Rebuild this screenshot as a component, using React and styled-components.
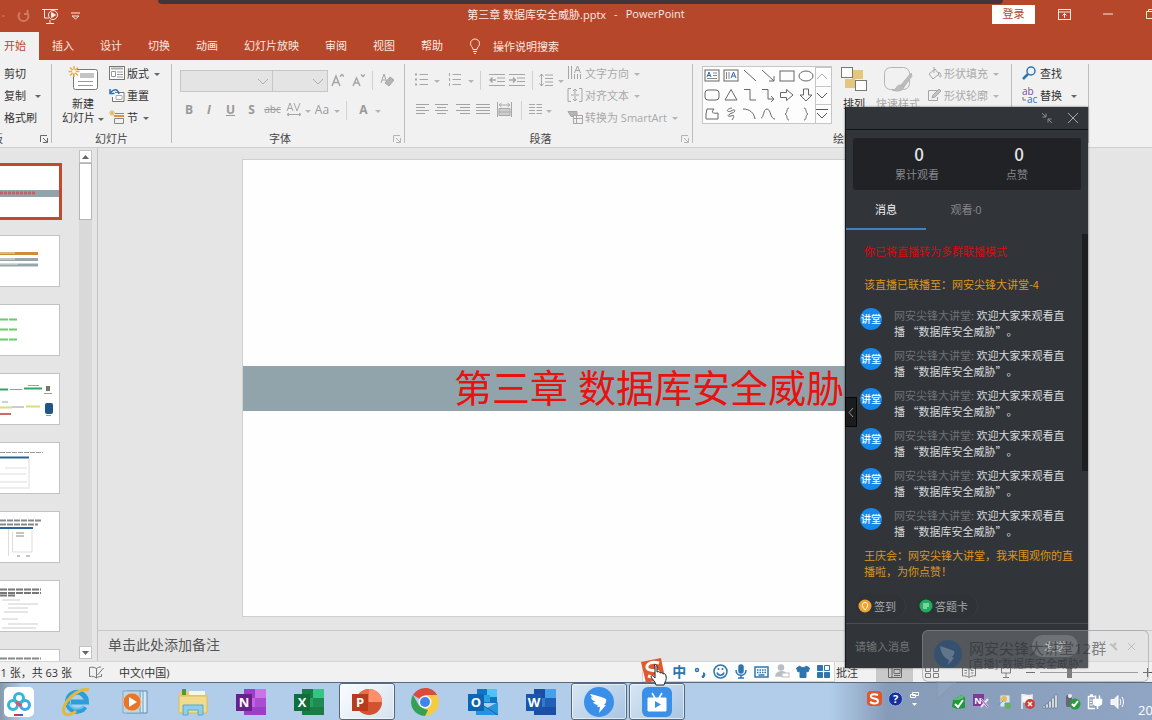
import React from 'react';
import styled, { createGlobalStyle, css } from 'styled-components';

const GlobalStyle = createGlobalStyle`
  * {
    box-sizing: border-box;
  }

  body {
    margin: 0;
    overflow: hidden;
    font-family: 'Open Sans', 'Noto Sans CJK SC', sans-serif;
    font-size: 11px;
    color: #333;
    text-spacing-trim: space-all;
  }

  button, input, select {
    font: inherit;
    color: inherit;
    margin: 0;
    padding: 0;
    border: 0;
    background: none;
  }

  svg {
    display: block;
    flex: none;
  }
`;

const Window = styled.div`
  position: relative;
  display: flex;
  flex-direction: column;
  height: 100vh;
  overflow: hidden;
  background: #e5e5e5;
`;

/* ---------- title bar and tabs ---------- */

const Header = styled.header`
  background: #b7472a;
  color: #fbe9e2;
`;

const ShareStrip = styled.div`
  position: absolute;
  top: 0;
  left: 158px;
  right: 149px;
  height: 4px;
  background: #43333a;
  border-radius: 0 0 4px 4px;
`;

const TitleBar = styled.div`
  display: grid;
  grid-template-columns: 1fr auto 1fr;
  align-items: center;
  height: 32px;
  padding-bottom: 4px;
`;

const QuickAccess = styled.div`
  display: flex;
  align-items: center;
  gap: 12px;
  padding-left: 2px;
  padding-top: 4px;
`;

const DocTitle = styled.span`
  display: flex;
  gap: 8px;
`;

const WindowButtons = styled.div`
  display: flex;
  justify-content: flex-end;
  margin-right: -20px;
`;

const Login = styled.button`
  width: 43px;
  height: 19px;
  margin-right: 8px;
  background: #fff;
  color: #b7472a;
  line-height: 16px;
`;

const WindowButton = styled.button`
  display: flex;
  align-items: center;
  justify-content: center;
  width: 43px;
`;

const Tabs = styled.nav`
  display: flex;
  height: 28px;
`;

const Tab = styled.button`
  padding: 0 13px;
  line-height: 26px;
  white-space: nowrap;

  ${(p) => p.$active && css`
    padding-left: 4px;
    background: #f1f1f1;
    color: #b7472a;
  `}
`;

const TellMe = styled.button`
  display: flex;
  align-items: center;
  gap: 12px;
  padding: 0 13px;
`;

/* ---------- ribbon ---------- */

const Ribbon = styled.section`
  display: flex;
  height: 88px;
  background: #f1f1f1;
  border-bottom: 1px solid #cfcfcf;
`;

const Group = styled.div`
  display: flex;
  flex-direction: column;
  flex: 0 0 ${(p) => p.$width}px;
  padding-top: 2px;
  overflow: hidden;
`;

const GroupBody = styled.div`
  display: flex;
  height: 66px;
  padding-left: ${(p) => p.$pad || 0}px;
`;

const GroupLabel = styled.div`
  display: flex;
  align-items: center;
  justify-content: space-between;
  height: 19px;
  color: #444;

  span {
    flex: 1;
    text-align: center;
  }
`;

const ClippedLabel = styled.div`
  display: flex;
  justify-content: flex-end;
  width: 3px;
  overflow: hidden;
  white-space: nowrap;
`;

const Launcher = styled.button`
  width: 16px;
  padding: 2px 0 0 5px;
`;

const Separator = styled.i`
  flex: none;
  width: 1px;
  margin: 4px 0;
  background: #bdbdbd;
`;

const Column = styled.div`
  display: flex;
  flex-direction: column;
  align-items: flex-start;
  margin-left: ${(p) => p.$gap || 0}px;
`;

const Command = styled.button`
  display: flex;
  align-items: center;
  gap: 2px;
  height: 22px;
  white-space: nowrap;
  color: ${(p) => (p.$off ? '#a9a9a9' : '#333')};
`;

const Caret = styled.i`
  flex: none;
  margin: 2px 0 0 ${(p) => p.$gap || 3}px;
  border: 3px solid transparent;
  border-top-color: ${(p) => (p.$off ? '#b5b5b5' : '#666')};
  border-bottom: 0;
`;

const BigCommand = styled.button`
  display: flex;
  flex-direction: column;
  align-items: center;
  padding-top: 3px;
  line-height: 14px;
  white-space: nowrap;
  color: ${(p) => (p.$off ? '#a9a9a9' : '#333')};

  svg {
    margin-bottom: 5px;
  }

  span {
    display: flex;
    align-items: center;
  }
`;

const ToolRow = styled.div`
  display: flex;
  align-items: center;
  height: ${(p) => p.$height || 30}px;
  color: #999;
`;

const Tool = styled.button`
  display: flex;
  align-items: center;
  justify-content: center;
  width: ${(p) => p.$width || 21}px;
  height: 22px;
  padding-bottom: 2px;
  font-size: 12px;
  font-weight: ${(p) => (p.$bold ? 700 : 400)};
  font-style: ${(p) => (p.$italic ? 'italic' : 'normal')};
  text-decoration: ${(p) => p.$line || 'none'};
`;

const ToolLine = styled.i`
  width: 1px;
  height: 19px;
  margin: 0 ${(p) => p.$gap || 6}px;
  background: #d2d2d2;
`;

const Combo = styled.span`
  position: relative;
  width: ${(p) => p.$width}px;
  height: 22px;
  margin-right: -1px;

  select {
    width: 100%;
    height: 100%;
    appearance: none;
    background: #e4e4e4;
    border: 1px solid #c6c6c6;
  }

  svg {
    position: absolute;
    right: 4px;
    top: 8px;
    pointer-events: none;
  }
`;

const Gallery = styled.div`
  display: flex;
  width: 130px;
  height: 58px;
  margin-top: 4px;
  background: #fdfdfd;
  border: 1px solid #c6c6c6;
`;

const Shapes = styled.div`
  flex: 1;
  display: grid;
  grid-template-columns: repeat(6, 1fr);
  place-items: center;
`;

const GalleryScroll = styled.div`
  display: flex;
  flex-direction: column;

  button {
    flex: 1;
    width: 16px;
    border-left: 1px solid #c6c6c6;
    border-top: 1px solid #c6c6c6;
  }
`;

/* ---------- workspace ---------- */

const Workspace = styled.main`
  flex: 1;
  display: flex;
  min-height: 0;
`;

const Thumbs = styled.aside`
  width: 79px;
  padding-top: 15px;
  overflow: hidden;
`;

const Thumb = styled.div`
  width: 60px;
  height: 52px;
  margin-bottom: 17px;
  background: #fff;
  border: 1px solid #c3c3c3;
  border-left: 0;

  ${(p) => p.$selected && css`
    width: 62px;
    height: 57px;
    margin-bottom: 15px;
    border: 3px solid #bf4a2e;
    border-left: 0;
  `}
`;

const ScrollTrack = styled.div`
  display: flex;
  flex-direction: column;
  width: 13px;
  margin: 2px 5px 2px 0;
  background: #d9d9d9;

  button {
    display: flex;
    align-items: center;
    justify-content: center;
    height: 13px;
    background: #fff;
    border: 1px solid #c3c3c3;
  }
`;

const ScrollThumb = styled.div`
  height: 57px;
  margin-bottom: auto;
  background: #fff;
  border: 1px solid #b5b5b5;
`;

const Editor = styled.section`
  flex: 1;
  display: flex;
  flex-direction: column;
  border-left: 1px solid #c3c3c3;
`;

const Canvas = styled.div`
  flex: 1;
  padding: 11px 96px 13px 144px;
`;

const Slide = styled.div`
  height: 100%;
  padding-top: 206px;
  background: #fefefe;
  border: 1px solid #cfcfcf;
`;

const SlideTitle = styled.h1`
  margin: 0;
  height: 45px;
  background: #91a4ac;
  color: #e8120f;
  font-size: 38px;
  font-weight: 400;
  line-height: 42px;
  text-align: center;
  white-space: nowrap;
`;

const Notes = styled.div`
  height: 31px;
  padding-left: 10px;
  border-top: 1px solid #c9c9c9;
  font-size: 14px;
  line-height: 28px;
  color: #555;
`;

/* ---------- status bar ---------- */

const StatusBar = styled.footer`
  display: flex;
  align-items: center;
  height: 21px;
  background: #f1f1f1;
  border-top: 1px solid #d5d5d5;
`;

const SlideCount = styled.span`
  display: flex;
  justify-content: flex-end;
  width: 72px;
  margin-right: 17px;
  overflow: hidden;
  white-space: nowrap;
`;

const Language = styled.span`
  margin: 0 auto 0 14px;
`;

const CommentsButton = styled.button`
  margin-right: 18px;
`;

const ViewButton = styled.button`
  display: flex;
  align-items: center;
  justify-content: center;
  width: 37px;
  height: 20px;
  background: ${(p) => (p.$active ? '#c9c9c9' : 'none')};
`;

const ZoomControl = styled.div`
  display: flex;
  align-items: center;
  gap: 5px;
  padding-left: 2px;
`;

const Zoom = styled.input`
  width: 98px;
  height: 16px;
  margin: 0;
  appearance: none;

  &::-webkit-slider-runnable-track {
    height: 1px;
    background: #8d8d8d;
  }

  &::-webkit-slider-thumb {
    appearance: none;
    width: 5px;
    height: 12px;
    margin-top: -6px;
    background: #666;
  }
`;

/* ---------- input method bar ---------- */

const ImeBar = styled.div`
  position: absolute;
  left: 642px;
  bottom: 38px;
  display: flex;
  align-items: center;
  height: 21px;
  width: 193px;
  padding-left: 26px;
  background: #fdfdfd;
  border: 1px solid #d5d5d5;
  color: #2e75b0;

  button {
    display: flex;
    justify-content: center;
    width: 21px;
    font-size: 14px;
    font-weight: 700;
    line-height: 18px;
  }
`;

const ImeLogo = styled.svg`
  position: absolute;
  left: -4px;
  top: -6px;
`;

/* ---------- taskbar ---------- */

const Taskbar = styled.nav`
  display: flex;
  height: 38px;
  border-top: 1px solid #566b82;
  background: linear-gradient(90deg, #8799ad 0, #b1cde9 22px, #b1cde9 72%, #869bb8 77%, #8fa5c3 100%);
`;

const Apps = styled.div`
  display: flex;
  gap: 2px;
  margin: 0 auto 0 -9px;
`;

const AppButton = styled.button`
  display: flex;
  align-items: center;
  justify-content: center;
  width: 56px;
  height: 37px;

  ${(p) => p.$open && css`
    border: 1px solid #53677d;
    border-radius: 3px;
    background: linear-gradient(135deg, ${p.$front ? '#fbfdff, #d5e2ef' : '#d8e6f4, #a9c5e2'});
    box-shadow: inset 0 0 0 1px rgba(255, 255, 255, 0.6);
  `}
`;

const Tray = styled.div`
  display: flex;
  align-items: center;
  gap: 6px;
  color: #fff;
`;

const TrayGroup = styled.div`
  display: flex;
  align-items: center;
  gap: 6px;
  margin-right: 26px;
  padding-bottom: 5px;
`;

const Clock = styled.span`
  width: 14px;
  margin-left: 6px;
  padding-top: 16px;
  overflow: hidden;
  font-size: 13px;
  line-height: 20px;
`;

/* ---------- live chat window ---------- */

const Live = styled.section`
  position: absolute;
  top: 107px;
  right: 64px;
  display: flex;
  flex-direction: column;
  width: 243px;
  height: 561px;
  background: #313539;
  border-left: 1px solid #17191b;
  box-shadow: 0 0 2px rgba(0, 0, 0, 0.6);
  color: #d8dadc;
  font-family: 'Noto Sans CJK SC', sans-serif;
`;

const LiveBar = styled.div`
  display: flex;
  align-items: center;
  justify-content: flex-end;
  gap: 14px;
  height: 23px;
  padding-right: 9px;
  border-bottom: 1px solid #111214;
`;

const Stats = styled.dl`
  display: flex;
  flex: none;
  margin: 8px 7px 0;
  padding: 5px 14px 0;
  height: 52px;
  background: #202226;
  border-radius: 3px;
  text-align: center;
`;

const Stat = styled.div`
  flex: 1;
  display: flex;
  flex-direction: column-reverse;
  justify-content: flex-end;

  dt {
    color: #85878a;
    line-height: 20px;
  }

  dd {
    margin: 0;
    padding-left: 4px;
    font-size: 17px;
    font-weight: 500;
    line-height: 21px;
    color: #e6e6e6;
  }
`;

const LiveTabs = styled.div`
  display: flex;
  font-family: 'Open Sans', 'Noto Sans CJK SC', sans-serif;
`;

const LiveTab = styled.button`
  width: 80px;
  height: 40px;
  border-bottom: 2px solid ${(p) => (p.$active ? '#3c82c4' : 'transparent')};
  color: ${(p) => (p.$active ? '#f2f2f2' : '#85878a')};
`;

const Feed = styled.div`
  flex: 1;
  display: flex;
  min-height: 0;
  padding: 13px 0 0 18px;
`;

const FeedList = styled.div`
  flex: 1;
  line-height: 16px;
`;

const FeedScroll = styled.div`
  width: 6px;
  height: 237px;
  margin: -9px 0 0;
  background: #1d1f22;
`;

const Notice = styled.p`
  margin: 0 0 ${(p) => p.$gap || 0}px;
  color: ${(p) => (p.$red ? '#d9090d' : '#dd961c')};
`;

const Message = styled.div`
  display: flex;
  gap: 12px;
  margin: 0 10px 8px -4px;

  p {
    margin: 0;
  }

  em {
    font-style: normal;
    color: #6f7276;
  }
`;

const Avatar = styled.span`
  flex: none;
  width: 22px;
  height: 22px;
  margin-top: 1px;
  border-radius: 50%;
  background: #1787ea;
  color: #fff;
  font-size: 10px;
  font-weight: 500;
  line-height: 21px;
  text-align: center;
`;

const Actions = styled.div`
  display: flex;
  gap: 12px;
  padding-left: 10px;
  height: 35px;
  align-items: center;
  border-bottom: 1px solid #494d51;
`;

const Action = styled.button`
  display: flex;
  align-items: center;
  gap: 2px;
  height: 24px;
  padding: 0 9px 0 2px;
  border-radius: 12px;
  background: #2f3337;
  box-shadow: 1px 0 0 #383c40;
  color: #a7a9ab;
`;

const Compose = styled.div`
  display: flex;
  align-items: center;
  justify-content: space-between;
  height: 44px;
  padding: 0 10px 0 9px;

  input {
    width: 90px;
  }

  input::placeholder {
    color: #74777a;
  }
`;

const Send = styled.button`
  width: 46px;
  height: 22px;
  border-radius: 11px;
  background: #54585b;
  color: #b5b7b9;
`;

const Fold = styled.button`
  position: absolute;
  left: -1px;
  top: 290px;
  display: flex;
  align-items: center;
  justify-content: center;
  width: 12px;
  height: 30px;
  background: #1b1c1e;
  border: 1px solid #050505;
`;

/* ---------- fading toast ---------- */

const Toast = styled.div`
  position: absolute;
  right: 3px;
  bottom: 38px;
  display: flex;
  gap: 6px;
  width: 227px;
  height: 52px;
  padding: 8px 10px;
  background: rgba(225, 226, 232, 0.2);
  border: 1px solid rgba(140, 145, 152, 0.5);
  border-radius: 6px;
  color: rgba(38, 42, 48, 0.55);
`;

const ToastText = styled.div`
  flex: 1;
  white-space: nowrap;
  line-height: 14px;

  strong {
    display: block;
    font-size: 15px;
    font-weight: 400;
    line-height: 18px;
  }
`;

const ToastIcons = styled.div`
  position: absolute;
  right: 12px;
  top: 11px;
  display: flex;
  gap: 9px;
`;

const ToastTail = styled.svg`
  position: absolute;
  left: 13px;
  top: 50px;
`;

/* ---------- drawings ---------- */

const Icon = ({ w = 15, h = w, children, c = '#a6a6a6', sw = 1 }) => (
  <svg width={w} height={h} viewBox={`0 0 ${w} ${h}`} fill="none" stroke={c} strokeWidth={sw} aria-hidden="true">
    {children}
  </svg>
);

const Chevron = ({ c = '#b0b0b0', up }) => (
  <Icon w={12} h={7} c={c}>
    <path d={up ? 'M1 6l5-5 5 5' : 'M1 1l5 5 5-5'} />
  </Icon>
);

const LaunchIcon = ({ off }) => (
  <Icon w={8} c={off ? '#b5b5b5' : '#666'}>
    <path d="M.5 7V.5H7M3 3l4 4M7.500 3v4.500H3" />
  </Icon>
);

const Lines = ({ rows }) => (
  <Icon w={14} h={13} c="#a3a3a3">
    {rows.map(([from, to], i) => (
      <path key={i} d={`M${from} ${i * 3 + 1.5}H${to}`} />
    ))}
  </Icon>
);

const shapes = [
  <><rect x="1" y="2" width="14" height="11" /><path d="M9 5h4M9 7.500h4M3 10.500h10" stroke="#888" /><path d="M3 9l2-5 2 5M4 7.500h2" stroke="#2b6ca8" /></>,
  <><rect x="1" y="2" width="14" height="11" /><path d="M3.500 4v7M6 4v7" stroke="#888" /><path d="M8 10l2.500-6 2.500 6M9 8h3" stroke="#2b6ca8" /></>,
  <path d="M2 2l12 11" />,
  <path d="M2 2l12 11M9 13h5V8" />,
  <rect x="1" y="3" width="14" height="10" />,
  <ellipse cx="8" cy="8" rx="7" ry="5" />,
  <rect x="1" y="3" width="14" height="10" rx="3" />,
  <path d="M8 2.500L2 13h12z" />,
  <path d="M2 2.500h6V13h6" />,
  <path d="M2 2.500h6V12h6M11 9l3 3-3 3" />,
  <path d="M1.500 5.500h6v-3L14 8l-6.500 5.500v-3h-6z" />,
  <path d="M5.500 2h5v6H14l-6 6-6-6h3.500z" />,
  <path d="M3 3h7c-3 3-2 5 4 4v6H2V8z" />,
  <path d="M9 2c-7 1-5 5-1 3 5-3 5 1 1 2-5 2-5 4-1 3 4-2 3 1 1 4" />,
  <path d="M1 3c7 0 11 4 12 10" />,
  <path d="M1 12c3 0 2-9 6-9s3 10 8 10" />,
  <path d="M10 2c-3 0-1 5-4 6 3 1 1 6 4 6" />,
  <path d="M6 2c3 0 1 5 4 6-3 1-1 6-4 6" />,
];

const thumbDrawings = [
  <><path d="M0 18h60v7H0z" fill="#91a4ac" transform="translate(0 6)" /><path d="M0 27h36" stroke="#d05a64" strokeWidth="3" strokeDasharray="3 1" /></>,
  <><path d="M0 17.500h38" stroke="#cf8a3a" strokeWidth="3" /><path d="M0 23.500h38M0 29h38" stroke="#97a5ad" strokeWidth="3" /><path d="M0 17h15M0 23h15M0 28h18" stroke="#e9e3cf" /></>,
  <path d="M0 14.500h17M0 24.500h17M0 34.500h17" stroke="#69cc69" strokeWidth="2" strokeDasharray="8 1" />,
  <><path d="M0 15.500h8M24 14.500h18" stroke="#38a169" strokeWidth="2" /><path d="M10 15.500h12M12 33h12M44 19.500h8M46 41.500h5" stroke="#999" /><path d="M28 11.500h11M2 28h6" stroke="#79b98c" /><path d="M0 33.500h12M26 32.500h14" stroke="#d9dc86" strokeWidth="2" /><path d="M0 40h11" stroke="#cf6a62" strokeWidth="2" /><rect x="45" y="29" width="8" height="11" rx="2" fill="#1f5587" /><path d="M46 12h4v5h-4z" fill="#776" /></>,
  <><path d="M0 9.500h43" stroke="#999" strokeDasharray="5 1" /><path d="M0 14.500h29" stroke="#2a6496" strokeWidth="2" /><path d="M29 16v30M5 25h22M0 31h26M0 39h27M0 45h28" stroke="#ddd" /></>,
  <><path d="M0 8.500h41M0 12.500h38" stroke="#888" strokeWidth="2" strokeDasharray="6 1" /><path d="M0 16h33" stroke="#2a6496" strokeWidth="2" /><path d="M8.500 17v27M12.500 20v20H32V18" stroke="#ddd" /><path d="M16 21h8M16 24h8M17 44h3M26 44h4" stroke="#888" /></>,
  <><path d="M0 8.500h41M0 12h41M0 14.500h16" stroke="#777" strokeWidth="2" strokeDasharray="7 1" /><path d="M2 19h18M8 23h30M8 27h20M4 31h24M2 38h16M8 43h30M2 47h34" stroke="#ccc" /></>,
  <path d="M0 8.500h41M0 12h41" stroke="#888" strokeWidth="2" strokeDasharray="7 1" />,
];

const OfficeIcon = ({ letter, dark, mid, light, pale }) => (
  <svg width="32" height="28" viewBox="0 0 32 28">
    <path d="M9 1h11v13H9z" fill={mid} />
    <path d="M20 1h11v9H20z" fill={pale} />
    <path d="M9 10h22v9H9z" fill={light} />
    <path d="M9 19h22v8H9z" fill={mid} />
    <path d="M20 10h11v9H20z" fill={mid} opacity=".6" />
    <rect x="1" y="6" width="16" height="17" fill={dark} />
    <text x="9" y="19" textAnchor="middle" fontSize="13" fontWeight="700" fill="#fff">{letter}</text>
  </svg>
);

const appIcons = [
  ['网盘', <svg width="30" height="30" viewBox="0 0 30 30"><rect width="30" height="30" rx="5" fill="#fff" /><g fill="none" strokeWidth="3"><circle cx="9" cy="18" r="4.500" stroke="#35b6d6" /><circle cx="21" cy="18" r="4.500" stroke="#3fa9e8" /><circle cx="15" cy="11" r="4.500" stroke="#35b6d6" /><path d="M12 15l5 4" stroke="#e85062" /></g><path d="M10 28h5" stroke="#d33" strokeWidth="2" /><path d="M15 28h4" stroke="#36c" strokeWidth="2" /></svg>],
  ['Internet Explorer', <svg width="32" height="32" viewBox="0 0 32 32" fill="none"><path d="M24 21a9.500 9.500 0 1 1 1.500-5H10" stroke="#2c9fdb" strokeWidth="5" /><path d="M23 20a9.500 9.500 0 0 1-15-2" stroke="#5cc6ee" strokeWidth="2" /><path d="M3 27C-1 18 18 0 28 4M3 27c3 4 10 0 12-2" stroke="#e5b936" strokeWidth="3" /></svg>],
  ['Media Player', <svg width="28" height="26" viewBox="0 0 28 26"><path d="M6 2h20v22H6z" fill="#d9e8f2" stroke="#5491b8" /><path d="M22 2v22M19 2v22" stroke="#6c9fc2" /><path d="M2 2h17v22H2z" fill="#bcd8e8" stroke="#7aaac6" /><circle cx="11" cy="13" r="9" fill="#e5762a" stroke="#f5bd8c" /><path d="M8 8l8 5-8 5z" fill="#fff" /></svg>],
  ['文件夹', <svg width="32" height="28" viewBox="0 0 32 28"><path d="M3 3h24l2 3v18H2V6z" fill="#e5cb72" /><path d="M5 1h4v6H5z" fill="#4d9a3c" /><path d="M12 3h16v4H12z" fill="#f9f5e5" /><path d="M2 8h28v17H2z" fill="#f1dc8d" stroke="#dcbd5b" /><path d="M6 27V17h20v10h-5v-5H11v5z" fill="#8fcdea" stroke="#5ba8cb" /></svg>],
  ['OneNote', <OfficeIcon letter="N" dark="#6b1f8b" mid="#9a3fc7" light="#c263e0" pale="#ca73e8" />],
  ['Excel', <OfficeIcon letter="X" dark="#0f6e3a" mid="#1c7b46" light="#24a263" pale="#35c481" />],
  ['PowerPoint', <svg width="32" height="28" viewBox="0 0 32 28"><circle cx="18" cy="14" r="13" fill="#d35230" /><path d="M18 1a13 13 0 0 1 13 13H18z" fill="#ff8f6b" /><path d="M18 1v13H5A13 13 0 0 1 18 1" fill="#ed6c47" /><rect x="1" y="6" width="16" height="17" fill="#b83b1d" /><text x="9" y="19" textAnchor="middle" fontSize="13" fontWeight="700" fill="#fff">P</text></svg>, true, true],
  ['Chrome', <svg width="28" height="28" viewBox="0 0 28 28"><path d="M14 14L1.900 7A14 14 0 0 1 26.100 7z" fill="#dc4a3c" /><path d="M14 0a14 14 0 0 1 12.100 7L14 7z" fill="#dc4a3c" /><path d="M14 14l12.100-7A14 14 0 0 1 14 28z" fill="#f5cb45" /><path d="M14 7h12.100L20 17.500z" fill="#f5cb45" /><path d="M14 28A14 14 0 0 1 1.900 7L8 17.500l6 3.500 3 1z" fill="#35a054" /><circle cx="14" cy="14" r="6.500" fill="#f4f4f4" /><circle cx="14" cy="14" r="5" fill="#4285e8" /></svg>],
  ['Outlook', <svg width="32" height="28" viewBox="0 0 32 28"><path d="M10 1h20v14H10z" fill="#1275c4" /><path d="M20 1h10v8H20z" fill="#4fc3f3" /><path d="M16 7h7v7h-7z" fill="#2da1df" /><path d="M9 14l11 6 11-6v13H9z" fill="#2594dc" /><path d="M31 27L17 18" stroke="#1066ae" /><rect x="1" y="6" width="16" height="17" fill="#0f65b4" /><text x="9" y="19" textAnchor="middle" fontSize="13" fontWeight="700" fill="#fff">O</text></svg>],
  ['Word', <OfficeIcon letter="W" dark="#1a56a8" mid="#1b4fa3" light="#2b7cd3" pale="#49a0ea" />],
  ['钉钉', <svg width="30" height="30" viewBox="0 0 30 30"><circle cx="15" cy="15" r="15" fill="#3a8fe8" /><path d="M6 7c6 1 12 3 16 5 1 3-1 5-2 6h2l-7 8 1-6h-3l1-2c-2 0-4-1-5-3h3c-3-1-5-3-5-5l3 1c-2-1-3-2-4-4z" fill="#fff" /></svg>, true],
  ['直播', <svg width="30" height="30" viewBox="0 0 30 30"><rect width="30" height="30" rx="6" fill="#3a8fe8" /><path d="M6 11h18v13H6z" fill="#fff" stroke="#fff" strokeLinejoin="round" /><path d="M10 6l3 5M20 6l-3 5" stroke="#fff" strokeWidth="1.500" /><path d="M13 14l6 3.500-6 3.500z" fill="#3a8fe8" /></svg>, true],
];

const trayIcons = [
  <svg width="16" height="16" viewBox="0 0 16 16"><path d="M2 6l8-5 4 2v11l-8 1-5-2z" fill="#1d9a3c" /><path d="M2 6l8-5 4 2-6 3z" fill="#5dbd70" /><path d="M4 10l3 3 5-7" fill="none" stroke="#fff" strokeWidth="2" /></svg>,
  <svg width="17" height="15" viewBox="0 0 17 15"><rect width="11" height="12" fill="#7d3a97" /><text x="5" y="10" textAnchor="middle" fontSize="9" fontWeight="700" fill="#fff">N</text><path d="M8 5l7 8M15 5l-7 8" stroke="#f1dff5" strokeWidth="2" /><path d="M8 5l7 8" stroke="#8a3da5" /></svg>,
  <svg width="17" height="16" viewBox="0 0 17 16"><rect x="4" y="1" width="10" height="12" fill="#dce6ee" stroke="#8da5b9" /><circle cx="8" cy="5" r="3" fill="#e9ba57" /><path d="M9 9h5v4H9zM2 11l5-4" fill="#4e9fd5" stroke="#4e9fd5" /><circle cx="12" cy="12" r="3" fill="#66b45a" /></svg>,
  <svg width="17" height="17" viewBox="0 0 17 17"><path d="M3 1v15M3 2c4-1 5 2 10 0v7c-5 2-6-1-10 0" fill="#f7f7f7" stroke="#eee" strokeWidth="1.500" /><circle cx="11" cy="11" r="5" fill="#d23b33" /><path d="M9 9l4 4M13 9l-4 4" stroke="#fff" strokeWidth="1.500" /></svg>,
  <svg width="17" height="15" viewBox="0 0 17 15"><path d="M1 12h2v2H1zM4 10h2v4H4zM7 7h2v7H7zM10 4h2v10h-2zM13 1h2v13h-2z" fill="#fff" stroke="#4d5d70" strokeWidth=".5" /></svg>,
  <svg width="16" height="17" viewBox="0 0 16 17"><rect x="1" y="2" width="6" height="12" rx="2" fill="#667" /><circle cx="5" cy="3" r="2" fill="#eee" /><circle cx="10" cy="11" r="5.500" fill="#2c9b3c" /><path d="M7 11l2 2 4-5" fill="none" stroke="#fff" strokeWidth="2" /></svg>,
  <svg width="16" height="16" viewBox="0 0 16 16" fill="none" stroke="#fff"><path d="M8 14.500H1.500v-12h6M3 1h3" strokeWidth="1.500" /><path d="M6.500 5.500h8v3c0 4-8 4-8 0zM10.500 11v4" fill="#fff" strokeWidth="1.500" /><path d="M8.500 1.500v4M12.500 1.500v4" strokeWidth="1.500" /><path d="M3 6h2M3 8.500h2M3 11h3" /></svg>,
  <svg width="17" height="16" viewBox="0 0 17 16" fill="none" stroke="#fff"><path d="M2 5.500h3l4-4v13l-4-4H2z" fill="#f3f3f3" /><path d="M11 5c1 2 1 4 0 6M13 3c2 3 2 7 0 10" /></svg>,
];

const tabs = ['插入', '设计', '切换', '动画', '幻灯片放映', '审阅', '视图', '帮助'];

const BulletIcon = ({ numbered }) => (
  <Icon w={13} h={15}>
    <path d="M4.500 2.500H13M4.500 7.500H13M4.500 12.500H13" />
    <path d={numbered ? 'M1.500 1v3M1.500 6v3M1.500 11v3' : 'M0 2.500h2M0 7.500h2M0 12.500h2'} strokeWidth={numbered ? 1 : 2} />
  </Icon>
);

const IndentIcon = ({ more }) => (
  <Icon w={16} h={14}>
    <path d="M0 1.500h16M8 5h8M8 8.500h8M0 12.500h16" />
    <path d={more ? 'M0 7h6M4 4.500L6.500 7 4 9.500' : 'M7 7H1M3.500 4.500L1 7l2.500 2.500'} strokeWidth="1.500" />
  </Icon>
);

const RibbonGroup = ({ width, pad, label, launch, off, children }) => (
  <>
    <Group $width={width}>
      <GroupBody $pad={pad}>{children}</GroupBody>
      <GroupLabel>
        <span>{label}</span>
        {launch && <Launcher aria-label={`${label}设置`}><LaunchIcon off={off} /></Launcher>}
      </GroupLabel>
    </Group>
    <Separator />
  </>
);

const HomeRibbon = () => (
  <Ribbon>
    <Group $width={51}>
      <GroupBody $pad={4}>
        <Column>
          <Command>剪切</Command>
          <Command>复制<Caret $gap={7} /></Command>
          <Command>格式刷</Command>
        </Column>
      </GroupBody>
      <GroupLabel>
        <ClippedLabel>剪贴板</ClippedLabel>
        <Launcher aria-label="剪贴板设置"><LaunchIcon /></Launcher>
      </GroupLabel>
    </Group>
    <Separator />

    <RibbonGroup width={119} pad={10} label="幻灯片">
      <BigCommand>
        <Icon w={32} h={27} c="#777">
          <rect x="6.500" y="4.500" width="24" height="20" rx="2" fill="#fff" />
          <path d="M11 16.500h15M11 20.500h15" stroke="#999" />
          <path d="M13 10.500h14" stroke="#c4c4c4" strokeWidth="5" />
          <path d="M7 1v11M1.500 6.500h11M3 2.500l8 8M11 2.500l-8 8" stroke="#e6b04e" strokeWidth="1.500" />
          <circle cx="7" cy="6.500" r="2" fill="#fff6dc" stroke="none" />
        </Icon>
        <span>新建</span>
        <span>幻灯片<Caret /></span>
      </BigCommand>
      <Column $gap={5}>
        <Command>
          <Icon w={16} h={14} c="#777"><rect x=".5" y=".5" width="15" height="13" fill="#fff" /><path d="M2 2.500h12" stroke="#aaa" strokeWidth="2" /><path d="M2.500 5.500h4v5h-4zM8 6h6M8 8.500h6M8 11h6" stroke="#999" /></Icon>
          版式<Caret />
        </Command>
        <Command>
          <Icon w={16} h={15} c="#777"><path d="M6 4.500h9v9H3.500V9" fill="#fff" /><path d="M7 7.500h6v4H7z" stroke="#aaa" /><path d="M1 5c4-5 8-4 9 1M1 1v4.500h4.500" stroke="#2d73b5" strokeWidth="1.500" /></Icon>
          重置
        </Command>
        <Command>
          <Icon w={16} h={15} c="#888"><path d="M6 3.500h9M5.500 8.500h9v5h-9z" /><path d="M5 6h10" stroke="#e0913e" strokeWidth="2" /><path d="M3 0v6M0 3h6M1 1l4 4M5 1L1 5" stroke="#e6b04e" /></Icon>
          节<Caret />
        </Command>
      </Column>
    </RibbonGroup>

    <RibbonGroup width={232} pad={8} label="字体" launch off>
      <Column>
        <ToolRow $height={37}>
          <Combo $width={93}><select aria-label="字体" /><Chevron /></Combo>
          <Combo $width={56}><select aria-label="字号" /><Chevron /></Combo>
          <Tool aria-label="增大字号"><Icon w={13} h={14} sw={1.5}><path d="M1 13L5 3l4 10M2.500 9.500h5M9 3.500l2-2 2 2" /></Icon></Tool>
          <Tool aria-label="减小字号"><Icon w={13} h={14} sw={1.5}><path d="M1 13l3.500-8L8 13M2.500 10h4M9 1.500l2 2 2-2" /></Icon></Tool>
          <ToolLine $gap={3} />
          <Tool aria-label="清除格式"><Icon w={14} h={14}><path d="M1 10L4 1l3 9M2 7h4" /><path d="M5 10l5-6 4 3-5 6z" fill="#b5b5b5" /></Icon></Tool>
        </ToolRow>
        <ToolRow $height={22}>
          <Tool $bold $width={18}>B</Tool>
          <Tool $bold $italic $width={22}>I</Tool>
          <Tool $bold $line="underline">U</Tool>
          <Tool $bold>S</Tool>
          <Tool $line="line-through" aria-label="删除线"><small>abc</small></Tool>
          <Tool aria-label="字符间距"><Icon w={16} h={15}><path d="M1 9l3-8 3 8M2 6.500h4M8 1l3 8 3-8M1 12.500h14M3 11l-2 1.500L3 14M13 11l2 1.500-2 1.500" /></Icon></Tool>
          <Caret $off $gap={1} />
          <Tool $width={22}>Aa</Tool>
          <Caret $off $gap={1} />
          <ToolLine $gap={6} />
          <Tool $bold>A</Tool>
          <Caret $off $gap={1} />
        </ToolRow>
      </Column>
    </RibbonGroup>

    <RibbonGroup width={287} pad={10} label="段落" launch off>
      <Column>
        <ToolRow $height={37}>
          <Tool $width={13} aria-label="项目符号"><BulletIcon /></Tool>
          <Caret $off $gap={6} />
          <Tool $width={29} aria-label="编号"><BulletIcon numbered /></Tool>
          <Caret $off $gap={-1} />
          <ToolLine $gap={6} />
          <Tool $width={20} aria-label="减少缩进"><IndentIcon /></Tool>
          <Tool $width={20} aria-label="增加缩进"><IndentIcon more /></Tool>
          <ToolLine $gap={5} />
          <Tool $width={16} aria-label="行距"><Icon w={14} h={14}><path d="M6 2h8M6 5.500h8M6 9h8M6 12.500h8M2.500 1v12M.5 3.500l2-2.500 2 2.500M.5 10.500l2 2.500 2-2.500" /></Icon></Tool>
          <Caret $off $gap={4} />
        </ToolRow>
        <ToolRow $height={22}>
          <Tool $width={15} aria-label="左对齐"><Lines rows={[[0, 13], [0, 9], [0, 13], [0, 9]]} /></Tool>
          <Tool $width={24} aria-label="居中"><Lines rows={[[0, 13], [2, 11], [0, 13], [2, 11]]} /></Tool>
          <Tool $width={18} aria-label="右对齐"><Lines rows={[[0, 14], [4, 14], [0, 14], [4, 14]]} /></Tool>
          <Tool $width={22} aria-label="两端对齐"><Lines rows={[[0, 14], [0, 14], [0, 14], [0, 14]]} /></Tool>
          <Tool aria-label="分散对齐"><Icon w={15} h={15}><path d="M.5 0v15M14.500 0v15M3 3h9M4.500 1L2 3l2.500 2M10.500 1L13 3l-2.500 2" /><path d="M2 6.500h11v7H2z" fill="#cfcfcf" /><path d="M2 10h11" /></Icon></Tool>
          <ToolLine $gap={6} />
          <Tool $width={15} aria-label="分栏"><Icon w={13} h={12}><path d="M0 1.500h6M0 4.500h6M0 7.500h6M0 10.500h6M7.500 1.500h5.500M7.500 4.500h5.500M7.500 7.500h5.500M7.500 10.500h5.500" /></Icon></Tool>
          <Caret $off $gap={3} />
        </ToolRow>
      </Column>
      <Column $gap={3}>
        <Command $off><Icon w={16} h={16}><path d="M1.500 1v13M4.500 1v13M7.500 9v5M10.500 9v5M13.500 9v5M7.500 8l3-7 3 7M9 5.500h4" /></Icon>文字方向<Caret $off /></Command>
        <Command $off><Icon w={16} h={16}><path d="M4 1.500H1v13h3M12 1.500h3v13h-3M8 2v5M6 4l2-2 2 2M8 9v5M6 12l2 2 2-2M4 8h8" /></Icon>对齐文本<Caret $off /></Command>
        <Command $off><Icon w={16} h={16}><path d="M1 2.500h9v5H4z" fill="#b5b5b5" /><rect x="6.500" y="6.500" width="9" height="8" fill="#f1f1f1" /><path d="M6 9.500h9M9.500 6v8" /></Icon>转换为 SmartArt<Caret $off /></Command>
      </Column>
    </RibbonGroup>

    <RibbonGroup width={318} pad={9} label="绘图" launch off>
      <Gallery>
        <Shapes>
          {shapes.map((shape, i) => (
            <Icon key={i} w={16} c="#666">{shape}</Icon>
          ))}
        </Shapes>
        <GalleryScroll>
          <button aria-label="上一行"><Chevron up /></button>
          <button aria-label="下一行"><Chevron c="#555" /></button>
          <button aria-label="其他形状"><Icon w={12} h={12} c="#555"><path d="M0 1.500h12M1 5l5 5 5-5" /></Icon></button>
        </GalleryScroll>
      </Gallery>
      <Column $gap={8}>
        <BigCommand>
          <Icon w={28} h={27} c="#777"><path d="M12 5h11v9H12z" fill="#e4c67c" stroke="none" /><path d="M5 14h10v9H5z" fill="#e4c67c" stroke="none" /><rect x="1.500" y="2.500" width="11" height="10" fill="#fff" /><rect x="15.500" y="15.500" width="11" height="10" fill="#fff" /></Icon>
          <span>排列</span>
        </BigCommand>
      </Column>
      <Column $gap={8}>
        <BigCommand $off>
          <Icon w={30} h={27} c="#b5b5b5"><rect x="1.500" y="2.500" width="25" height="22" rx="6" /><path d="M28 8L18 20l3 2 8-11zM17 20c-4 0-3 5-8 5 5 2 11 1 12-3z" fill="#bcbcbc" /></Icon>
          <span>快速样式</span>
        </BigCommand>
      </Column>
      <Column $gap={7}>
        <Command $off><Icon w={15} h={15}><path d="M2 8l6-5 4 5-6 5zM7 1v6M12 6c3 3 2 6 1 5s-2-2-1-5z" /></Icon>形状填充<Caret $off /></Command>
        <Command $off><Icon w={15} h={15}><path d="M10 2.500H1.500v10h9V9" /><path d="M5 10l1-3 6-6 2 2-6 6z" fill="#c5c5c5" /></Icon>形状轮廓<Caret $off /></Command>
      </Column>
    </RibbonGroup>

    <RibbonGroup width={76} pad={10} label="编辑">
      <Column>
        <Command><Icon w={16} h={15} c="#2d73b5" sw={1.5}><circle cx="9" cy="5" r="4" /><path d="M6 8l-5 5" strokeWidth="2.500" /></Icon>查找</Command>
        <Command>
          <svg width="16" height="17" viewBox="0 0 16 17"><text x="0" y="8" fontSize="10" fill="#7b4a9e">ab</text><text x="5" y="16" fontSize="10" fill="#2d73b5">ac</text><path d="M1 10v3h3" fill="none" stroke="#777" /></svg>
          替换<Caret $gap={7} />
        </Command>
      </Column>
    </RibbonGroup>
  </Ribbon>
);

const LivePanel = () => (
  <Live>
    <LiveBar>
      <button aria-label="缩小"><Icon w={12} h={12} c="#8b8d90"><path d="M1 1l4 4M5 1.500V5H1.500M11 11L7 7M7 10.500V7h3.500" /></Icon></button>
      <button aria-label="关闭"><Icon w={12} h={12} c="#a7a9ab"><path d="M1 1l10 10M11 1L1 11" /></Icon></button>
    </LiveBar>
    <Stats>
      <Stat><dt>累计观看</dt><dd>0</dd></Stat>
      <Stat><dt>点赞</dt><dd>0</dd></Stat>
    </Stats>
    <LiveTabs>
      <LiveTab $active>消息</LiveTab>
      <LiveTab>观看·0</LiveTab>
    </LiveTabs>
    <Feed>
      <FeedList>
        <Notice $red $gap={17}>你已将直播转为多群联播模式</Notice>
        <Notice $gap={15}>该直播已联播至：网安尖锋大讲堂-4</Notice>
        {[1, 2, 3, 4, 5, 6].map((id) => (
          <Message key={id}>
            <Avatar>讲堂</Avatar>
            <p><em>网安尖锋大讲堂:</em> 欢迎大家来观看直播 “数据库安全威胁”。</p>
          </Message>
        ))}
        <Notice>王庆会：网安尖锋大讲堂，我来围观你的直播啦，为你点赞！</Notice>
      </FeedList>
      <FeedScroll />
    </Feed>
    <Actions>
      <Action><Icon w={14} h={14} c="#fff"><circle cx="7" cy="7" r="6.500" fill="#f0a332" stroke="none" /><path d="M7 11C3 7 4 3.500 7 3.500S11 7 7 11z" /></Icon>签到</Action>
      <Action><Icon w={14} h={14} c="#d8f5e2"><circle cx="7" cy="7" r="6.500" fill="#1fae5e" stroke="none" /><path d="M4 5h6M4 7h6M4 9h4" /></Icon>答题卡</Action>
    </Actions>
    <Compose>
      <input aria-label="消息" placeholder="请输入消息" />
      <Send>发送</Send>
    </Compose>
    <Fold aria-label="收起"><Icon w={6} h={11} c="#9a9a9a"><path d="M5 1L1 5.500 5 10" /></Icon></Fold>
  </Live>
);

export default function App() {
  return (
    <Window>
      <GlobalStyle />
      <Header>
        <TitleBar>
          <QuickAccess>
            <Icon w={3} h={2} c="#cf8069"><path d="M0 1h3" /></Icon>
            <Icon w={13} h={13} c="#cc7b64" sw={2}><path d="M3 2.500a5 5 0 1 0 7 0M10.500 0v4H7" /></Icon>
            <Icon w={17} h={16} c="#fbe9e2"><path d="M0 1.500h16M2.500 2v8H7M8 12v3M4 15.500h8" /><circle cx="11" cy="7" r="4.500" /><path d="M9.500 4.500L13.500 7l-4 2.500z" fill="#fbe9e2" /></Icon>
            <Icon w={9} h={8} c="#fbe9e2"><path d="M0 1h9M1 4l3.500 3L8 4z" /></Icon>
          </QuickAccess>
          <DocTitle>
            <span>第三章 数据库安全威胁.pptx</span>
            <span>-</span>
            <span>PowerPoint</span>
          </DocTitle>
          <WindowButtons>
            <Login>登录</Login>
            <WindowButton aria-label="功能区显示选项"><Icon w={13} h={11} c="#fbe9e2"><rect x=".5" y=".5" width="12" height="10" /><path d="M1 3h11M6.500 9V4.500M4.500 6.500l2-2 2 2" /></Icon></WindowButton>
            <WindowButton aria-label="最小化"><Icon w={10} h={2} c="#fbe9e2"><path d="M0 1h10" /></Icon></WindowButton>
            <WindowButton aria-label="还原"><Icon w={10} h={10} c="#fbe9e2"><path d="M.5 2.500h7v7h-7zM2.500 2V.5h7v7H8" /></Icon></WindowButton>
          </WindowButtons>
        </TitleBar>
        <Tabs>
          <Tab $active>开始</Tab>
          {tabs.map((tab) => <Tab key={tab}>{tab}</Tab>)}
          <TellMe>
            <Icon w={12} h={16} c="#fbe9e2"><path d="M4 11.500C4 9 1.500 8.500 1.500 5.500a4.500 4.500 0 0 1 9 0C10.500 8.500 8 9 8 11.500zM4 13.500h4M5 15.500h2" /></Icon>
            操作说明搜索
          </TellMe>
        </Tabs>
      </Header>
      <ShareStrip />

      <HomeRibbon />

      <Workspace>
        <Thumbs>
          {thumbDrawings.map((drawing, i) => (
            <Thumb key={i} $selected={i === 0}>
              <svg width="59" height="50" viewBox="0 0 59 50" fill="none">{drawing}</svg>
            </Thumb>
          ))}
        </Thumbs>
        <ScrollTrack>
          <button aria-label="向上"><svg width="7" height="4"><path d="M0 4l3.500-4L7 4z" fill="#666" /></svg></button>
          <ScrollThumb />
          <button aria-label="向下"><svg width="7" height="4"><path d="M0 0l3.500 4L7 0z" fill="#666" /></svg></button>
        </ScrollTrack>
        <Editor>
          <Canvas>
            <Slide><SlideTitle>第三章 数据库安全威胁</SlideTitle></Slide>
          </Canvas>
          <Notes>单击此处添加备注</Notes>
        </Editor>
      </Workspace>

      <StatusBar>
        <SlideCount>幻灯片 第 1 张，共 63 张</SlideCount>
        <Icon w={16} h={13} c="#777"><path d="M7.500 2.500C5 1 3 1 .5 1.500v9c3-.5 5 0 7 1.500 1-1 2-1.500 5-1.500V8M7.500 2.500V12M7.500 2.500C9 1.500 10 1 12 1M8.500 9l6-7" /></Icon>
        <Language>中文(中国)</Language>
        <CommentsButton>批注</CommentsButton>
        <ViewButton $active aria-label="普通视图"><Icon w={14} h={12} c="#666"><path d="M.5.5h13v11H.5zM4 1v10M6 3.500h6v4H6zM6 9.500h6" /></Icon></ViewButton>
        <ViewButton aria-label="幻灯片浏览"><Icon w={14} h={11} c="#666"><path d="M.5.5h5v4h-5zM8.500.5h5v4h-5zM.5 6.500h5v4h-5zM8.500 6.500h5v4h-5z" /></Icon></ViewButton>
        <ViewButton aria-label="阅读视图"><Icon w={14} h={11} c="#666"><path d="M7 2C5 .5 3 .5.500 1v8C3 8.500 5 9 7 10.500 9 9 11 8.500 13.500 9V1C11 .5 9 .5 7 2v8M2.500 3.500H5M2.500 6H5M9 3.500h2.500M9 6h2.500" /></Icon></ViewButton>
        <ViewButton aria-label="放映"><Icon w={12} h={12} c="#666"><path d="M0 1.500h12M1.500 2v5h9V2M6 7v4M3 11.500h6" /></Icon></ViewButton>
        <ZoomControl>
          <button aria-label="缩小显示"><Icon w={9} h={9} c="#555"><path d="M0 4.500h9" /></Icon></button>
          <Zoom type="range" aria-label="显示比例" defaultValue={29} />
          <button aria-label="放大显示"><Icon w={9} h={9} c="#555"><path d="M0 4.500h9M4.500 0v9" /></Icon></button>
        </ZoomControl>
      </StatusBar>

      <Taskbar>
        <Apps>
          {appIcons.map(([name, icon, open, front]) => (
            <AppButton key={name} aria-label={name} $open={open} $front={front}>{icon}</AppButton>
          ))}
        </Apps>
        <Tray>
          <TrayGroup>
            <svg width="15" height="16" viewBox="0 0 15 16"><rect width="15" height="15" rx="4" fill="#e2562c" /><path d="M11 4C6 2 3 4 4 6s7 1 7 4-4 3-8 1" fill="none" stroke="#fff" strokeWidth="2" /></svg>
            <svg width="15" height="16" viewBox="0 0 15 16"><circle cx="7.500" cy="8" r="7" fill="#16309c" stroke="#99abe0" /><text x="7.500" y="12" textAnchor="middle" fontSize="11" fontWeight="700" fill="#fff">?</text></svg>
            <Icon w={10} h={16} c="#fff"><path d="M3.500 1.500h6v3h-6zM1.500 3.500h5v3h-5z" /><path d="M3 12h5l-2.500 3z" fill="#fff" stroke="none" /></Icon>
          </TrayGroup>
          {trayIcons.map((icon, i) => <React.Fragment key={i}>{icon}</React.Fragment>)}
          <Clock>20</Clock>
        </Tray>
      </Taskbar>

      <ImeBar>
        <button>中</button>
        <button aria-label="标点"><Icon w={12} h={12} c="#2e75b0" sw={1.5}><circle cx="3" cy="4" r="1.500" /><path d="M9 7.500c2 0 1 3-1 4" strokeWidth="2.500" /></Icon></button>
        <button aria-label="表情"><Icon w={15} c="#2e75b0" sw={1.5}><circle cx="7.500" cy="7.500" r="6.500" /><path d="M4 8.500c1 3.500 6 3.500 7 0M5.500 4v2M9.500 4v2" /></Icon></button>
        <button aria-label="语音"><Icon w={12} h={15} c="#2e75b0" sw={1.5}><rect x="4" y="1" width="4" height="8" rx="2" fill="#2e75b0" /><path d="M1 6c0 7 10 7 10 0M6 11v3M3 14h6" /></Icon></button>
        <button aria-label="键盘"><Icon w={15} h={12} c="#2e75b0" sw={1.5}><rect x="1" y="1" width="13" height="10" /><path d="M3 4h9M3 6.500h9" strokeDasharray="1.500 1" /><path d="M4.500 9h6" /></Icon></button>
        <button aria-label="手写"><Icon w={15} c="#b9bec4" sw={1.5}><circle cx="6" cy="3.500" r="2.500" fill="#b9bec4" /><path d="M1 12c0-5 8-5 9-3H7v3z" fill="#b9bec4" /><rect x="7" y="9" width="7" height="4" fill="#fff" strokeWidth="1" /></Icon></button>
        <button aria-label="皮肤"><Icon w={14} h={13} c="#2e75b0"><path d="M4 1c1 2 5 2 6 0l3.500 2-1.500 4-2-1v6.500H4V6L2 7 .5 3z" fill="#2e75b0" /></Icon></button>
        <button aria-label="工具箱"><Icon w={13} h={13} c="#2e75b0"><path d="M.5.5h5v5h-5zM.5 7.500h5v5h-5zM7.500 7.500h5v5h-5z" fill="#2e75b0" /><path d="M7.500.5h5v5h-5z" /></Icon></button>
        <ImeLogo width="30" height="30" viewBox="0 0 30 30">
          <path d="M2 6l20-4 4 20-19 5z" fill="#e05a30" />
          <path d="M20 7C12 5 7 8 8 12s12 1 12 5-5 5-11 3" fill="none" stroke="#fff" strokeWidth="3" />
          <path d="M15 9c2-1 3 0 3 2v5c2-1 3 0 3 1 1-1 3 0 3 1 1-1 3 0 3 2 1 4-1 5-2 9h-8c-1-4-4-6-5-8 0-2 2-2 4 1V10z" fill="#fff" stroke="#222" />
        </ImeLogo>
      </ImeBar>

      <LivePanel />

      <Toast>
        <svg width="30" height="30" viewBox="0 0 30 30"><circle cx="15" cy="15" r="14" fill="#274f7b" opacity=".65" /><path d="M7 7c5 2 10 3 14 5 1 3-1 5-2 6l2 1-6 7 1-5c-5-2-8-7-9-14z" fill="#81909f" opacity=".6" /></svg>
        <ToastText>
          <strong>网安尖锋大讲堂12群</strong>
          [直播]“数据库安全威胁”
        </ToastText>
        <ToastIcons>
          <Icon w={9} h={9} c="rgba(150,150,155,.5)" sw={2}><path d="M1 2l3 2 4 4M4 4l3-3" /></Icon>
          <Icon w={9} h={9} c="rgba(150,150,155,.5)"><path d="M1 1l7 7M8 1L1 8" /></Icon>
        </ToastIcons>
        <ToastTail width="24" height="20" viewBox="0 0 24 20"><path d="M1 0v18L20 1" fill="rgba(190,195,205,.15)" stroke="#8a93a0" strokeOpacity=".7" /></ToastTail>
      </Toast>
    </Window>
  );
}
